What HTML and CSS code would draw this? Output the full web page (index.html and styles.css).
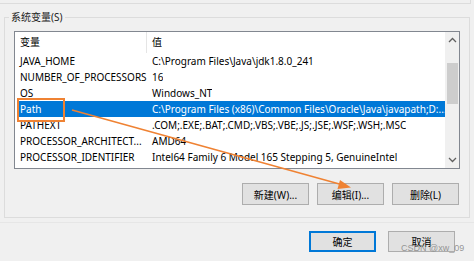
FILE: index.html
```html
<!DOCTYPE html>
<html>
<head>
<meta charset="utf-8">
<link rel="stylesheet" href="styles.css">
</head>
<body>
<div class="page">
  <div class="topstrip"></div>
  <fieldset class="group">
    <legend class="legend">系统变量(S)</legend>
    <div class="listbox">
      <div class="rows">
        <div class="row head"><div class="c1">变量</div><div class="c2">值</div></div>
        <div class="row"><div class="c1">JAVA_HOME</div><div class="c2">C:\Program Files\Java\jdk1.8.0_241</div></div>
        <div class="row"><div class="c1">NUMBER_OF_PROCESSORS</div><div class="c2">16</div></div>
        <div class="row"><div class="c1">OS</div><div class="c2">Windows_NT</div></div>
        <div class="row sel"><div class="c1">Path</div><div class="c2">C:\Program Files (x86)\Common Files\Oracle\Java\javapath;D:...</div></div>
        <div class="row"><div class="c1">PATHEXT</div><div class="c2">.COM;.EXE;.BAT;.CMD;.VBS;.VBE;.JS;.JSE;.WSF;.WSH;.MSC</div></div>
        <div class="row"><div class="c1">PROCESSOR_ARCHITECT...</div><div class="c2">AMD64</div></div>
        <div class="row"><div class="c1">PROCESSOR_IDENTIFIER</div><div class="c2">Intel64 Family 6 Model 165 Stepping 5, GenuineIntel</div></div>
      </div>
      <div class="scrollbar">
        <svg class="arrow" width="9" height="6" viewBox="0 0 9 6"><path d="M1 5 L4.5 1.5 L8 5" fill="none" stroke="#606060" stroke-width="1.3"/></svg>
        <div class="track"><div class="thumb"></div></div>
        <svg class="arrow" width="9" height="6" viewBox="0 0 9 6"><path d="M1 1 L4.5 4.5 L8 1" fill="none" stroke="#606060" stroke-width="1.3"/></svg>
      </div>
    </div>
    <div class="btnrow">
      <button class="btn">新建(W)...</button>
      <button class="btn">编辑(I)...</button>
      <button class="btn">删除(L)</button>
    </div>
  </fieldset>
  <div class="sep"></div>
  <div class="btnrow bottom">
    <button class="btn default">确定</button>
    <button class="btn">取消</button>
  </div>
  <div class="hl"></div>
  <svg class="overlay" width="474" height="261" viewBox="0 0 474 261">
    <line x1="72" y1="110" x2="343" y2="185" stroke="#ef8233" stroke-width="1.6"/>
    <polygon points="351,187.5 340,180 337.5,189" fill="#ef8233"/>
  </svg>
  <div class="wm">CSDN @xw_09</div>
</div>
</body>
</html>
```
FILE: styles.css
```css
* { box-sizing: border-box; }
html, body { margin: 0; padding: 0; }
body {
  background: #f0f0f0;
  font-family: "Noto Sans", "Noto Sans CJK SC", sans-serif;
  font-size: 10px;
  color: #000;
}
.page {
  position: relative;
  width: 474px;
  height: 261px;
  overflow: hidden;
}
.topstrip {
  width: 471px;
  height: 4px;
  border-bottom: 1px solid #dcdcdc;
  border-right: 1px solid #dcdcdc;
}
.group {
  margin: 5px 0 0 4px;
  width: 466px;
  padding: 0 0 12px 0;
  border: 1px solid #dcdcdc;
  min-width: 0;
}
.legend {
  margin-left: 4px;
  padding: 0 2px;
  line-height: 16px;
  height: 16px;
  color: #222;
}
.listbox {
  margin: 6px 0 0 9px;
  width: 446px;
  height: 138px;
  border: 1px solid #828790;
  background: #fff;
  display: flex;
}
.rows {
  flex: 1;
  padding-left: 2px;
  overflow: hidden;
}
.row {
  display: flex;
  height: 16px;
  line-height: 16px;
  white-space: nowrap;
}
.row.head {
  height: 21px;
  line-height: 20px;
}
.c1 {
  width: 130px;
  padding-left: 3px;
  overflow: hidden;
  flex: none;
}
.c2 {
  padding-left: 5px;
  overflow: hidden;
}
.head .c1 { border-right: 1px solid #e5e5e5; }
.sel { background: #0078d7; color: #fff; }
.scrollbar {
  width: 14px;
  flex: none;
  background: #f0f0f0;
  display: flex;
  flex-direction: column;
  align-items: center;
}
.arrow { margin: 5px 0; flex: none; }
.track {
  flex: 1;
  width: 100%;
  padding: 15px 1px 0 2px;
}
.thumb {
  height: 41px;
  background: #cdcdcd;
}
.btnrow {
  display: flex;
  justify-content: flex-end;
  gap: 8px;
  margin-top: 14px;
  padding-right: 10px;
}
.btn {
  width: 67px;
  height: 22px;
  background: #e1e1e1;
  border: 1px solid #adadad;
  font: inherit;
  color: #000;
  padding: 0;
}
.btn.default { border: 2px solid #0078d7; }
.sep {
  margin-top: 4px;
  height: 1px;
  background: #e6e6e6;
}
.bottom {
  margin-top: 8px;
  gap: 12px;
  padding-right: 19px;
}
.bottom .btn { height: 21px; }
.hl {
  position: absolute;
  left: 17px;
  top: 98px;
  width: 48px;
  height: 24px;
  border: 2px solid #ef8233;
}
.overlay {
  position: absolute;
  left: 0;
  top: 0;
  pointer-events: none;
}
.wm {
  position: absolute;
  left: 401px;
  top: 243px;
  white-space: nowrap;
  font-family: "Liberation Sans", sans-serif;
  font-size: 9px;
  color: rgba(120, 120, 120, 0.75);
}
```
